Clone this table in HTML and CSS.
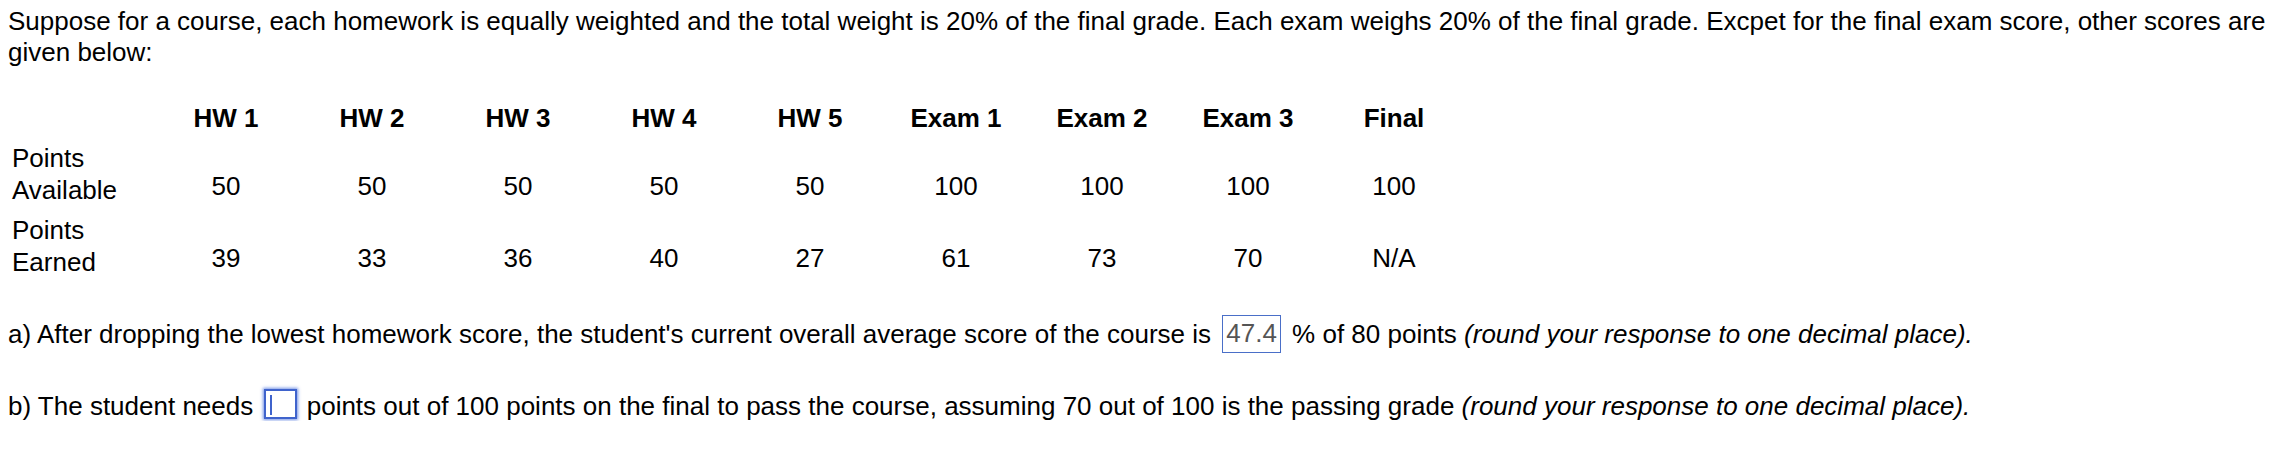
FILE: index.html
```html
<!DOCTYPE html>
<html>
<head>
<meta charset="utf-8">
<link rel="stylesheet" href="styles.css">
</head>
<body>
<div class="page">
  <p class="intro">Suppose for a course, each homework is equally weighted and the total weight is 20% of the final grade. Each exam weighs 20% of the final grade. Excpet for the final exam score, other scores are given below:</p>

  <div class="scores">
    <div class="label"></div>
    <div class="head">HW 1</div>
    <div class="head">HW 2</div>
    <div class="head">HW 3</div>
    <div class="head">HW 4</div>
    <div class="head">HW 5</div>
    <div class="head">Exam 1</div>
    <div class="head">Exam 2</div>
    <div class="head">Exam 3</div>
    <div class="head">Final</div>

    <div class="label">Points<br>Available</div>
    <div class="val">50</div>
    <div class="val">50</div>
    <div class="val">50</div>
    <div class="val">50</div>
    <div class="val">50</div>
    <div class="val">100</div>
    <div class="val">100</div>
    <div class="val">100</div>
    <div class="val">100</div>

    <div class="label">Points<br>Earned</div>
    <div class="val">39</div>
    <div class="val">33</div>
    <div class="val">36</div>
    <div class="val">40</div>
    <div class="val">27</div>
    <div class="val">61</div>
    <div class="val">73</div>
    <div class="val">70</div>
    <div class="val">N/A</div>
  </div>

  <p class="q q-a">a) After dropping the lowest homework score, the student's current overall average score of the course is <span class="answer">47.4</span> % of 80 points <em>(round your response to one decimal place).</em></p>

  <p class="q q-b">b) The student needs <span class="answer empty"><span class="caret"></span></span> points out of 100 points on the final to pass the course, assuming 70 out of 100 is the passing grade <em>(round your response to one decimal place).</em></p>
</div>
</body>
</html>
```

FILE: styles.css
```css
html, body {
  margin: 0;
  padding: 0;
  background: #ffffff;
}

.page {
  padding: 6px 8px 0 8px;
  font-family: "Liberation Sans", Arial, Helvetica, sans-serif;
  font-size: 26px;
  line-height: 31px;
  color: #000000;
}

.intro {
  margin: 0;
}

.scores {
  display: grid;
  grid-template-columns: 145px repeat(9, 146px);
  row-gap: 8px;
  margin-top: 34px;
  line-height: 32px;
  align-items: end;
}

.label {
  text-align: left;
  padding-left: 4px;
}

.head {
  font-weight: bold;
  text-align: center;
}

.val {
  text-align: center;
  padding-bottom: 4px;
}

.q {
  margin: 0;
  display: flex;
  align-items: center;
  white-space: pre;
}

.q-a {
  margin-top: 37px;
  height: 38px;
}

.q-b {
  margin-top: 38px;
  height: 30px;
}

.q em {
  font-style: italic;
}

.answer {
  display: inline-block;
  box-sizing: border-box;
  height: 38px;
  line-height: 35px;
  padding: 0 3px;
  margin: 0 4px 0 4px;
  border: 1.5px solid #4a6fc8;
  color: #555555;
}

.answer.empty {
  width: 33px;
  height: 30px;
  padding: 0;
  border: 2px solid #3f63cc;
  box-shadow: 0 0 3px 1px rgba(70, 110, 220, 0.75);
  position: relative;
  margin: 0 2px 4px 4px;
}

.caret {
  position: absolute;
  left: 4px;
  top: 4px;
  height: 20px;
  border-left: 2px solid #3f63cc;
}
```
